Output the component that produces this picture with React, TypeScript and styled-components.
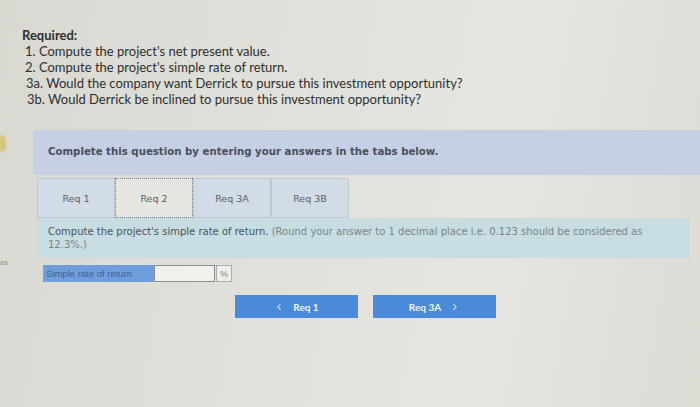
import React from "react";
import styled, { createGlobalStyle } from "styled-components";
import { ChevronLeft, ChevronRight } from "lucide-react";

const Global = createGlobalStyle`
  html, body { margin: 0; padding: 0; }
  body { background: #e1e1db; }
`;

const Page = styled.div`
  position: relative;
  width: 700px;
  height: 407px;
  overflow: hidden;
  box-sizing: border-box;
  padding-top: 27px;
  background: linear-gradient(100deg, #d9d9d2 0%, #e1e1db 40%, #e6e6e0 70%, #dcdbd4 100%);
  font-family: Lato, "Liberation Sans", sans-serif;
`;

const Required = styled.section`
  padding-left: 22px;
  color: #2e2e2e;
  font-size: 13px;
  line-height: 16px;
`;

const Title = styled.div`
  font-weight: 700;
`;

const Item = styled.div<{ $indent: number }>`
  padding-left: ${(p) => p.$indent}px;
`;

const BandRow = styled.div`
  display: flex;
  margin-top: 23px;
  height: 45px;
`;

const Gutter = styled.div<{ $w: number }>`
  width: ${(p) => p.$w}px;
  flex: none;
  display: flex;
  flex-direction: column;
`;

const YellowMark = styled.div`
  margin-top: 5px;
  width: 6px;
  height: 17px;
  background: #d9c26a;
  border-radius: 0 8px 8px 0;
  filter: blur(1px);
`;

const Band = styled.div`
  flex: 1;
  background: #c5d0e5;
  display: flex;
  align-items: center;
  padding-left: 15px;
  padding-bottom: 3px;
  font-family: "DejaVu Sans", Verdana, sans-serif;
  font-weight: 700;
  font-size: 10.2px;
  color: #4a4e5a;
`;

const Tabs = styled.div`
  display: flex;
  margin-top: 3px;
  margin-left: 37px;
`;

const Tab = styled.div<{ $active?: boolean }>`
  width: 78px;
  height: 40px;
  box-sizing: border-box;
  display: flex;
  align-items: center;
  justify-content: center;
  font-family: "DejaVu Sans", Verdana, sans-serif;
  font-size: 9.5px;
  color: #5b6067;
  background: ${(p) => (p.$active ? "#e6e6e0" : "#d2dce6")};
  border: 1px ${(p) => (p.$active ? "dotted #6f7b88" : "solid #bfc8d0")};
`;

const Panel = styled.div`
  margin-left: 37px;
  width: 653px;
  box-sizing: border-box;
  height: 40px;
  padding: 7px 40px 0 11px;
  background: #c7dde2;
  font-family: "DejaVu Sans", Verdana, sans-serif;
  font-size: 10px;
  line-height: 13px;
  color: #4b525a;
`;

const Muted = styled.span`
  color: #7b838b;
`;

const InputRow = styled.div`
  display: flex;
  margin-top: 7px;
  height: 17px;
`;

const EdgeText = styled.div`
  font-family: "DejaVu Sans", sans-serif;
  font-size: 7px;
  color: #8a8c90;
  margin-top: -6px;
`;

const Label = styled.div`
  width: 111px;
  box-sizing: border-box;
  padding-left: 3px;
  display: flex;
  align-items: center;
  background: #6f9edf;
  color: #3e5e94;
  font-family: "Liberation Sans", Arial, sans-serif;
  font-size: 9.5px;
`;

const Field = styled.div`
  width: 61px;
  box-sizing: border-box;
  border: 1px solid #8a8f94;
  background: #f1f1ec;
`;

const Pct = styled.div`
  width: 16px;
  margin-left: 1px;
  box-sizing: border-box;
  border: 1px solid #a7abaf;
  background: #efefea;
  display: flex;
  align-items: center;
  justify-content: center;
  font-family: "Liberation Sans", Arial, sans-serif;
  font-size: 9px;
  color: #777b80;
`;

const Nav = styled.div`
  display: flex;
  gap: 15px;
  margin-top: 13px;
  margin-left: 235px;
`;

const NavButton = styled.div`
  width: 123px;
  height: 23px;
  display: flex;
  align-items: center;
  justify-content: center;
  gap: 9px;
  background: #4a8bd9;
  color: #eef3fb;
  font-family: Lato, "Liberation Sans", sans-serif;
  font-weight: 700;
  font-size: 10px;
`;

export default function App() {
  return (
    <>
      <Global />
      <Page>
        <Required>
          <Title>Required:</Title>
          <Item $indent={3}>1. Compute the project's net present value.</Item>
          <Item $indent={3}>2. Compute the project's simple rate of return.</Item>
          <Item $indent={4}>3a. Would the company want Derrick to pursue this investment opportunity?</Item>
          <Item $indent={5}>3b. Would Derrick be inclined to pursue this investment opportunity?</Item>
        </Required>

        <BandRow>
          <Gutter $w={33}>
            <YellowMark />
          </Gutter>
          <Band>Complete this question by entering your answers in the tabs below.</Band>
        </BandRow>

        <Tabs>
          <Tab>Req 1</Tab>
          <Tab $active>Req 2</Tab>
          <Tab>Req 3A</Tab>
          <Tab>Req 3B</Tab>
        </Tabs>

        <Panel>
          Compute the project's simple rate of return.{" "}
          <Muted>(Round your answer to 1 decimal place i.e. 0.123 should be considered as</Muted>{" "}
          <Muted>12.3%.)</Muted>
        </Panel>

        <InputRow>
          <Gutter $w={43}>
            <EdgeText>es</EdgeText>
          </Gutter>
          <Label>Simple rate of return</Label>
          <Field />
          <Pct>%</Pct>
        </InputRow>

        <Nav>
          <NavButton>
            <ChevronLeft size={10} strokeWidth={2.5} />
            <span>Req 1</span>
          </NavButton>
          <NavButton>
            <span>Req 3A</span>
            <ChevronRight size={10} strokeWidth={2.5} />
          </NavButton>
        </Nav>
      </Page>
    </>
  );
}
